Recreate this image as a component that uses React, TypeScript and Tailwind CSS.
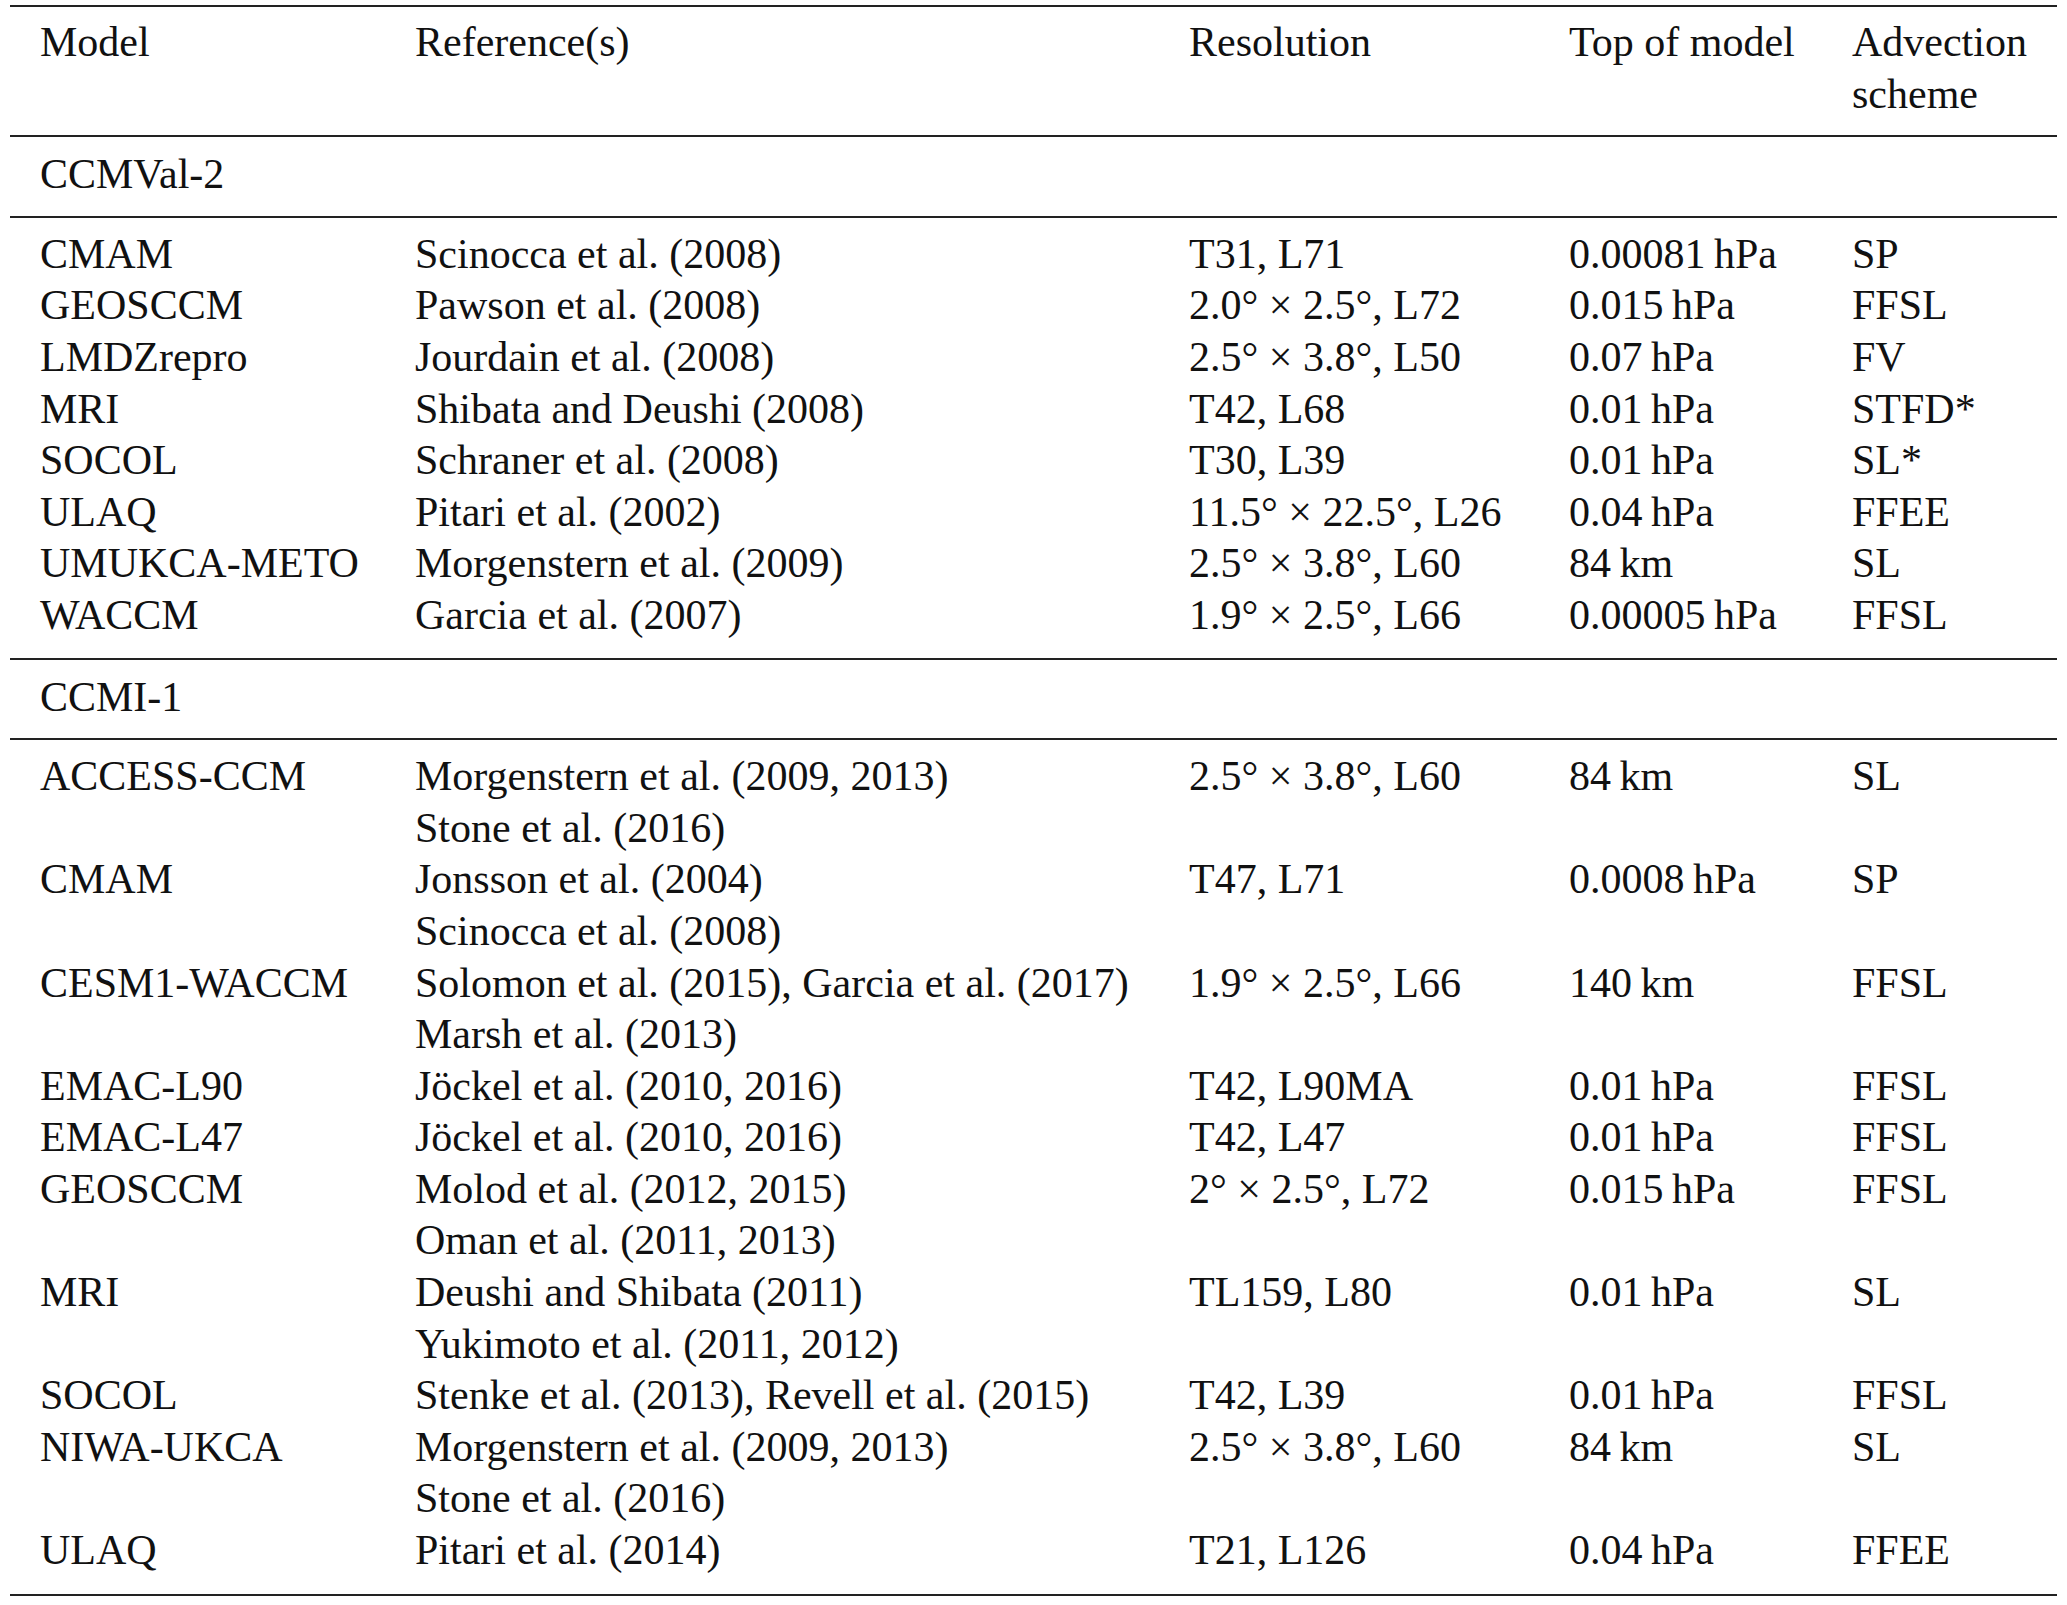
const ccmval2 = [
  { model: 'CMAM', refs: ['Scinocca et al. (2008)'], res: 'T31, L71', top: '0.00081\u2009hPa', adv: 'SP' },
  { model: 'GEOSCCM', refs: ['Pawson et al. (2008)'], res: '2.0° × 2.5°, L72', top: '0.015\u2009hPa', adv: 'FFSL' },
  { model: 'LMDZrepro', refs: ['Jourdain et al. (2008)'], res: '2.5° × 3.8°, L50', top: '0.07\u2009hPa', adv: 'FV' },
  { model: 'MRI', refs: ['Shibata and Deushi (2008)'], res: 'T42, L68', top: '0.01\u2009hPa', adv: 'STFD*' },
  { model: 'SOCOL', refs: ['Schraner et al. (2008)'], res: 'T30, L39', top: '0.01\u2009hPa', adv: 'SL*' },
  { model: 'ULAQ', refs: ['Pitari et al. (2002)'], res: '11.5° × 22.5°, L26', top: '0.04\u2009hPa', adv: 'FFEE' },
  { model: 'UMUKCA-METO', refs: ['Morgenstern et al. (2009)'], res: '2.5° × 3.8°, L60', top: '84\u2009km', adv: 'SL' },
  { model: 'WACCM', refs: ['Garcia et al. (2007)'], res: '1.9° × 2.5°, L66', top: '0.00005\u2009hPa', adv: 'FFSL' },
];

const ccmi1 = [
  { model: 'ACCESS-CCM', refs: ['Morgenstern et al. (2009, 2013)', 'Stone et al. (2016)'], res: '2.5° × 3.8°, L60', top: '84\u2009km', adv: 'SL' },
  { model: 'CMAM', refs: ['Jonsson et al. (2004)', 'Scinocca et al. (2008)'], res: 'T47, L71', top: '0.0008\u2009hPa', adv: 'SP' },
  { model: 'CESM1-WACCM', refs: ['Solomon et al. (2015), Garcia et al. (2017)', 'Marsh et al. (2013)'], res: '1.9° × 2.5°, L66', top: '140\u2009km', adv: 'FFSL' },
  { model: 'EMAC-L90', refs: ['Jöckel et al. (2010, 2016)'], res: 'T42, L90MA', top: '0.01\u2009hPa', adv: 'FFSL' },
  { model: 'EMAC-L47', refs: ['Jöckel et al. (2010, 2016)'], res: 'T42, L47', top: '0.01\u2009hPa', adv: 'FFSL' },
  { model: 'GEOSCCM', refs: ['Molod et al. (2012, 2015)', 'Oman et al. (2011, 2013)'], res: '2° × 2.5°, L72', top: '0.015\u2009hPa', adv: 'FFSL' },
  { model: 'MRI', refs: ['Deushi and Shibata (2011)', 'Yukimoto et al. (2011, 2012)'], res: 'TL159, L80', top: '0.01\u2009hPa', adv: 'SL' },
  { model: 'SOCOL', refs: ['Stenke et al. (2013), Revell et al. (2015)'], res: 'T42, L39', top: '0.01\u2009hPa', adv: 'FFSL' },
  { model: 'NIWA-UKCA', refs: ['Morgenstern et al. (2009, 2013)', 'Stone et al. (2016)'], res: '2.5° × 3.8°, L60', top: '84\u2009km', adv: 'SL' },
  { model: 'ULAQ', refs: ['Pitari et al. (2014)'], res: 'T21, L126', top: '0.04\u2009hPa', adv: 'FFEE' },
];

type Row = (typeof ccmval2)[number];

const cols = 'grid grid-cols-[375px_774px_380px_283px_1fr] pl-[30px]';

function Rows({ rows, last }: { rows: Row[]; last?: boolean }) {
  return (
    <div className={`border-t-2 border-[#222] pt-[11px] ${last ? 'pb-[17px]' : 'pb-[16px]'}`}>
      {rows.map((r) => (
        <div key={r.model + r.refs[0]} className={cols}>
          <div>{r.model}</div>
          <div>
            {r.refs.map((ref) => (
              <div key={ref}>{ref}</div>
            ))}
          </div>
          <div>{r.res}</div>
          <div>{r.top}</div>
          <div>{r.adv}</div>
        </div>
      ))}
    </div>
  );
}

function Group({ title }: { title: string }) {
  return (
    <div className={`${cols} border-t-2 border-[#222] pt-[12px] pb-[15px]`}>
      <div className="col-span-5">{title}</div>
    </div>
  );
}

export default function App() {
  return (
    <div className="w-[2067px] h-[1605px] bg-white pl-[10px] pr-[10px] pt-[5px] text-[#111] text-[42px] leading-[51.6px] font-['Liberation_Serif','Times_New_Roman',serif]">
      <div className="border-b-2 border-[#222]">
        <div className={`${cols} border-t-2 border-[#222] pt-[10px] pb-[15px]`}>
          <div>Model</div>
          <div>Reference(s)</div>
          <div>Resolution</div>
          <div>Top of model</div>
          <div>
            Advection
            <br />
            scheme
          </div>
        </div>
        <Group title="CCMVal-2" />
        <Rows rows={ccmval2} />
        <Group title="CCMI-1" />
        <Rows rows={ccmi1} last />
      </div>
    </div>
  );
}
